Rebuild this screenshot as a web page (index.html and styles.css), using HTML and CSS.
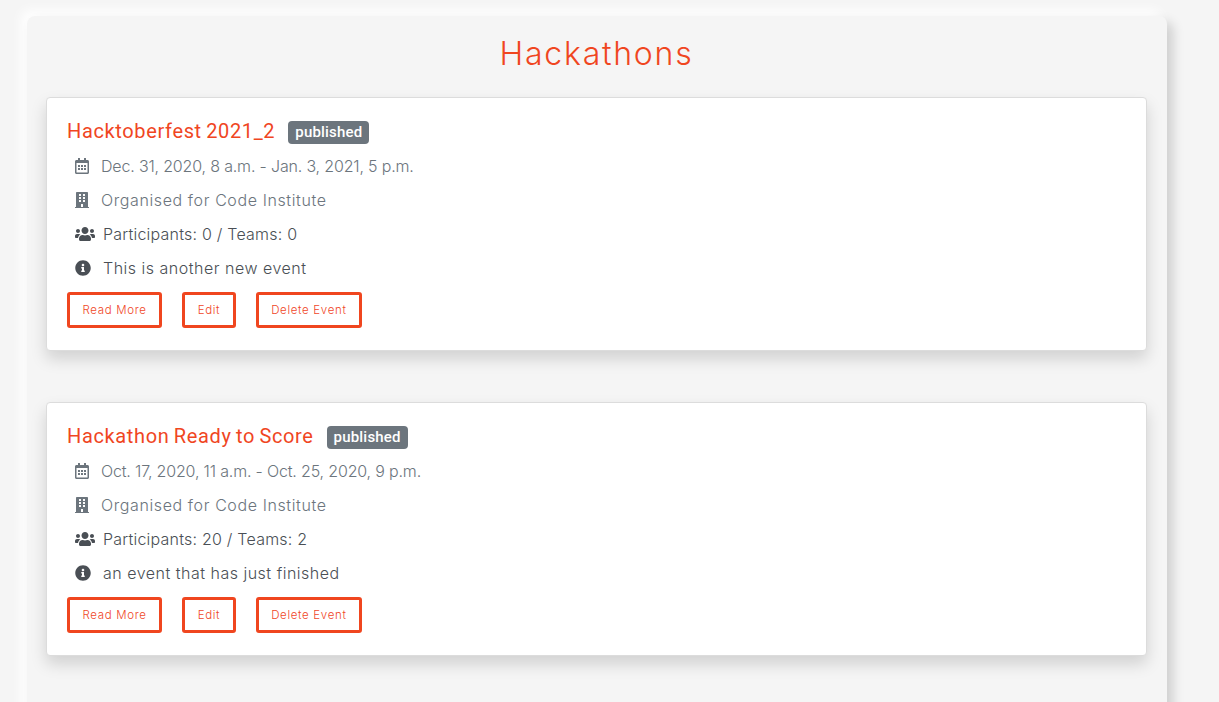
FILE: index.html
```html
<!DOCTYPE html>
<html lang="en">
<head>
<meta charset="utf-8">
<title>Hackathons</title>
<link rel="stylesheet" href="styles.css">
</head>
<body>
<svg class="defs" width="0" height="0" aria-hidden="true">
  <symbol id="i-cal" viewBox="0 0 448 512"><path d="M148 288h-40c-6.6 0-12-5.4-12-12v-40c0-6.6 5.4-12 12-12h40c6.6 0 12 5.4 12 12v40c0 6.6-5.4 12-12 12zm108-12v-40c0-6.6-5.4-12-12-12h-40c-6.6 0-12 5.4-12 12v40c0 6.6 5.4 12 12 12h40c6.6 0 12-5.4 12-12zm96 0v-40c0-6.6-5.4-12-12-12h-40c-6.6 0-12 5.4-12 12v40c0 6.6 5.4 12 12 12h40c6.6 0 12-5.4 12-12zm-96 96v-40c0-6.6-5.4-12-12-12h-40c-6.6 0-12 5.4-12 12v40c0 6.6 5.4 12 12 12h40c6.6 0 12-5.4 12-12zm-96 0v-40c0-6.6-5.4-12-12-12h-40c-6.6 0-12 5.4-12 12v40c0 6.6 5.4 12 12 12h40c6.6 0 12-5.4 12-12zm192 0v-40c0-6.6-5.4-12-12-12h-40c-6.6 0-12 5.4-12 12v40c0 6.6 5.4 12 12 12h40c6.6 0 12-5.4 12-12zm96-260v352c0 26.5-21.5 48-48 48H48c-26.5 0-48-21.5-48-48V112c0-26.5 21.5-48 48-48h48V12c0-6.6 5.4-12 12-12h40c6.6 0 12 5.4 12 12v52h128V12c0-6.6 5.4-12 12-12h40c6.6 0 12 5.4 12 12v52h48c26.5 0 48 21.5 48 48zm-48 346V160H48v298c0 3.3 2.7 6 6 6h340c3.3 0 6-2.7 6-6z"/></symbol>
  <symbol id="i-bld" viewBox="0 0 448 512"><path d="M436 480h-20V24c0-13.255-10.745-24-24-24H56C42.745 0 32 10.745 32 24v456H12c-6.627 0-12 5.373-12 12v20h448v-20c0-6.627-5.373-12-12-12zM128 76c0-6.627 5.373-12 12-12h40c6.627 0 12 5.373 12 12v40c0 6.627-5.373 12-12 12h-40c-6.627 0-12-5.373-12-12V76zm0 96c0-6.627 5.373-12 12-12h40c6.627 0 12 5.373 12 12v40c0 6.627-5.373 12-12 12h-40c-6.627 0-12-5.373-12-12v-40zm52 148h-40c-6.627 0-12-5.373-12-12v-40c0-6.627 5.373-12 12-12h40c6.627 0 12 5.373 12 12v40c0 6.627-5.373 12-12 12zm76 160h-64v-84c0-6.627 5.373-12 12-12h40c6.627 0 12 5.373 12 12v84zm64-172c0 6.627-5.373 12-12 12h-40c-6.627 0-12-5.373-12-12v-40c0-6.627 5.373-12 12-12h40c6.627 0 12 5.373 12 12v40zm0-96c0 6.627-5.373 12-12 12h-40c-6.627 0-12-5.373-12-12v-40c0-6.627 5.373-12 12-12h40c6.627 0 12 5.373 12 12v40zm0-96c0 6.627-5.373 12-12 12h-40c-6.627 0-12-5.373-12-12V76c0-6.627 5.373-12 12-12h40c6.627 0 12 5.373 12 12v40z"/></symbol>
  <symbol id="i-usr" viewBox="0 0 640 512"><path d="M96 224c35.3 0 64-28.7 64-64s-28.7-64-64-64-64 28.7-64 64 28.7 64 64 64zm448 0c35.3 0 64-28.7 64-64s-28.7-64-64-64-64 28.7-64 64 28.7 64 64 64zm32 32h-64c-17.6 0-33.5 7.1-45.1 18.6 40.3 22.1 68.9 62 75.1 109.4h66c17.7 0 32-14.3 32-32v-32c0-35.3-28.7-64-64-64zm-256 0c61.9 0 112-50.1 112-112S381.9 32 320 32 208 82.1 208 144s50.1 112 112 112zm76.8 32h-8.3c-20.8 10-43.9 16-68.5 16s-47.6-6-68.5-16h-8.3C179.6 288 128 339.6 128 403.2V432c0 26.5 21.5 48 48 48h288c26.5 0 48-21.5 48-48v-28.8c0-63.6-51.6-115.2-115.2-115.2zm-223.7-13.4C161.5 263.1 145.6 256 128 256H64c-35.3 0-64 28.7-64 64v32c0 17.7 14.3 32 32 32h65.9c6.3-47.4 34.9-87.3 75.2-109.4z"/></symbol>
  <symbol id="i-inf" viewBox="0 0 512 512"><path d="M256 8C119.043 8 8 119.083 8 256c0 136.997 111.043 248 248 248s248-111.003 248-248C504 119.083 392.957 8 256 8zm0 110c23.196 0 42 18.804 42 42s-18.804 42-42 42-42-18.804-42-42 18.804-42 42-42zm56 254c0 6.627-5.373 12-12 12h-88c-6.627 0-12-5.373-12-12v-24c0-6.627 5.373-12 12-12h12v-64h-12c-6.627 0-12-5.373-12-12v-24c0-6.627 5.373-12 12-12h64c6.627 0 12 5.373 12 12v100h12c6.627 0 12 5.373 12 12v24z"/></symbol>
</svg>
<main class="panel">
  <h1 class="heading">Hackathons</h1>
  <article class="card">
    <h2 class="title"><span class="title-text">Hacktoberfest 2021_2</span><span class="badge">published</span></h2>
    <p class="row muted date"><svg class="icon ic-cal"><use href="#i-cal"/></svg><span>Dec. 31, 2020, 8 a.m. - Jan. 3, 2021, 5 p.m.</span></p>
    <p class="row muted org"><svg class="icon ic-bld"><use href="#i-bld"/></svg><span>Organised for Code Institute</span></p>
    <p class="row dark count"><svg class="icon ic-usr"><use href="#i-usr"/></svg><span>Participants: 0 / Teams: 0</span></p>
    <p class="row dark desc"><svg class="icon ic-inf"><use href="#i-inf"/></svg><span>This is another new event</span></p>
    <div class="actions"><a class="btn">Read More</a><a class="btn">Edit</a><a class="btn">Delete Event</a></div>
  </article>
  <article class="card">
    <h2 class="title"><span class="title-text">Hackathon Ready to Score</span><span class="badge">published</span></h2>
    <p class="row muted date"><svg class="icon ic-cal"><use href="#i-cal"/></svg><span>Oct. 17, 2020, 11 a.m. - Oct. 25, 2020, 9 p.m.</span></p>
    <p class="row muted org"><svg class="icon ic-bld"><use href="#i-bld"/></svg><span>Organised for Code Institute</span></p>
    <p class="row dark count"><svg class="icon ic-usr"><use href="#i-usr"/></svg><span>Participants: 20 / Teams: 2</span></p>
    <p class="row dark desc"><svg class="icon ic-inf"><use href="#i-inf"/></svg><span>an event that has just finished</span></p>
    <div class="actions"><a class="btn">Read More</a><a class="btn">Edit</a><a class="btn">Delete Event</a></div>
  </article>
</main>
</body>
</html>
```
FILE: styles.css
```css
* { box-sizing: border-box; }
html, body { height: 100%; overflow: hidden; }
body {
  margin: 0;
  padding: 16px 0 0 27px;
  background: #f5f5f5;
  font-family: "Inter", "Liberation Sans", sans-serif;
  color: #4a4f55;
}
.defs { display: block; }
.panel {
  width: 1140px;
  height: 760px;
  padding: 0 20px 0 19px;
  background: #f5f5f5;
  border-radius: 8px;
  box-shadow: 6px 6px 12px rgba(0,0,0,.16), -6px -6px 12px #fff;
}
.heading {
  margin: 0;
  padding-top: 17px;
  height: 81px;
  text-align: center;
  font-size: 32px;
  line-height: 42px;
  font-weight: 300;
  letter-spacing: 1.75px;
  color: #f0461f;
}
.card {
  height: 254px;
  margin-bottom: 51px;
  padding: 20px 20px 0;
  background: #fff;
  border: 1px solid #dcdcdc;
  border-radius: 4px;
  box-shadow: 0 8px 16px rgba(0,0,0,.15);
}
.title {
  display: flex;
  align-items: center;
  height: 26px;
  margin: 0 0 5px;
  font-family: "Roboto", sans-serif;
  font-size: 20px;
  font-weight: 400;
  color: #f0461f;
}
.title-text { margin-right: 13px; letter-spacing: .64px; word-spacing: -1.2px; }
.badge {
  height: 23px;
  margin-top: 2px;
  padding: 0 7px;
  background: #6c757d;
  border-radius: 4px;
  color: #fff;
  font-size: 15px;
  letter-spacing: .2px;
  line-height: 23px;
  font-weight: 500;
}
.row {
  display: flex;
  align-items: center;
  height: 34px;
  margin: 0;
  font-size: 16px;
  font-weight: 350;
}
.muted { color: #6c757d; }
.dark { color: #4a4f55; }
.date { letter-spacing: -.17px; }
.org { letter-spacing: .6px; }
.count { letter-spacing: .22px; }
.desc { letter-spacing: .5px; }
.icon { flex: none; fill: currentColor; height: 16px; }
.ic-cal, .ic-bld { width: 14px; margin: 0 12px 0 8px; }
.ic-usr { width: 20px; margin: 0 8px; }
.ic-inf { width: 16px; margin: 0 12px 0 8px; }
.actions { display: flex; gap: 20px; margin-top: 7px; }
.btn {
  display: block;
  height: 36px;
  padding: 0 12.5px;
  border: 3px solid #f0461f;
  border-radius: 3px;
  color: #f0461f;
  font-size: 11.5px;
  font-weight: 350;
  letter-spacing: .66px;
  line-height: 30px;
}
```
